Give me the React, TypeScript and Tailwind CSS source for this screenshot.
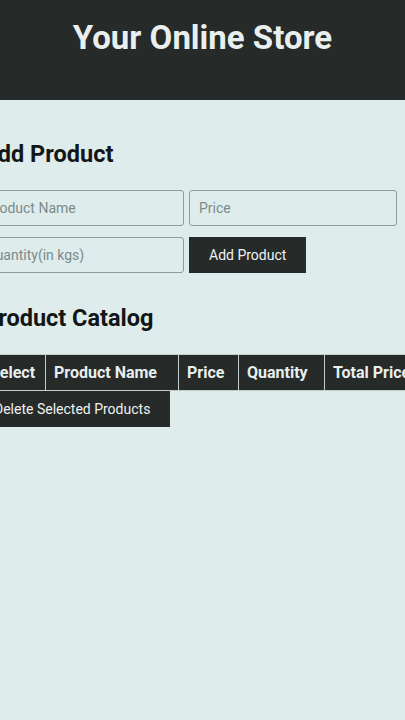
import React from "react";

export default function App() {
  const cols = [
    { label: "Select", w: "w-[64px]" },
    { label: "Product Name", w: "w-[133px]" },
    { label: "Price", w: "w-[60px]" },
    { label: "Quantity", w: "w-[86px]" },
    { label: "Total Price", w: "w-[104px]" },
  ];
  return (
    <div className="min-h-[720px] w-full overflow-hidden bg-[#dfecec] font-['Roboto',sans-serif]">
      <header className="h-[100px] bg-[#262a29] pt-[18px] text-center">
        <h1 className="text-[33px] font-bold leading-[40px] text-[#e8efee]">Your Online Store</h1>
      </header>
      <main className="-ml-[24px] flex w-[480px] flex-col items-start pt-[38px]">
        <h2 className="ml-[6px] text-[23.5px] font-bold leading-[32px] text-[#121616]">Add Product</h2>
        <div className="mt-[20px] grid grid-cols-[208px_208px] gap-x-[5px] gap-y-[11px]">
          <input
            placeholder="Product Name"
            className="h-[36px] rounded-[3px] border border-[#8d9c9c] bg-transparent px-[9px] text-[14px] text-[#121616] outline-none placeholder:text-[#7b8a8a]"
          />
          <input
            placeholder="Price"
            className="h-[36px] rounded-[3px] border border-[#8d9c9c] bg-transparent px-[9px] text-[14px] text-[#121616] outline-none placeholder:text-[#7b8a8a]"
          />
          <input
            placeholder="Quantity(in kgs)"
            className="h-[36px] rounded-[3px] border border-[#8d9c9c] bg-transparent px-[9px] text-[14px] text-[#121616] outline-none placeholder:text-[#7b8a8a]"
          />
          <div>
            <button className="h-[36px] bg-[#262a29] px-[20px] text-[14px] text-[#eef3f2]">Add Product</button>
          </div>
        </div>
        <h2 className="ml-[7px] mt-[29px] text-[23.5px] font-bold leading-[32px] text-[#121616]">Product Catalog</h2>
        <table className="ml-[5px] mt-[20px] table-fixed border-collapse">
          <thead>
            <tr>
              {cols.map((c) => (
                <th
                  key={c.label}
                  className={`${c.w} h-[36px] whitespace-nowrap border border-[#c3cccb] bg-[#262a29] px-[8px] text-left text-[16px] font-bold text-[#e8efee]`}
                >
                  {c.label}
                </th>
              ))}
            </tr>
          </thead>
        </table>
        <button className="ml-[5px] h-[36px] bg-[#262a29] pl-[13px] pr-[20px] text-[14px] text-[#eef3f2]">
          Delete Selected Products
        </button>
      </main>
    </div>
  );
}
